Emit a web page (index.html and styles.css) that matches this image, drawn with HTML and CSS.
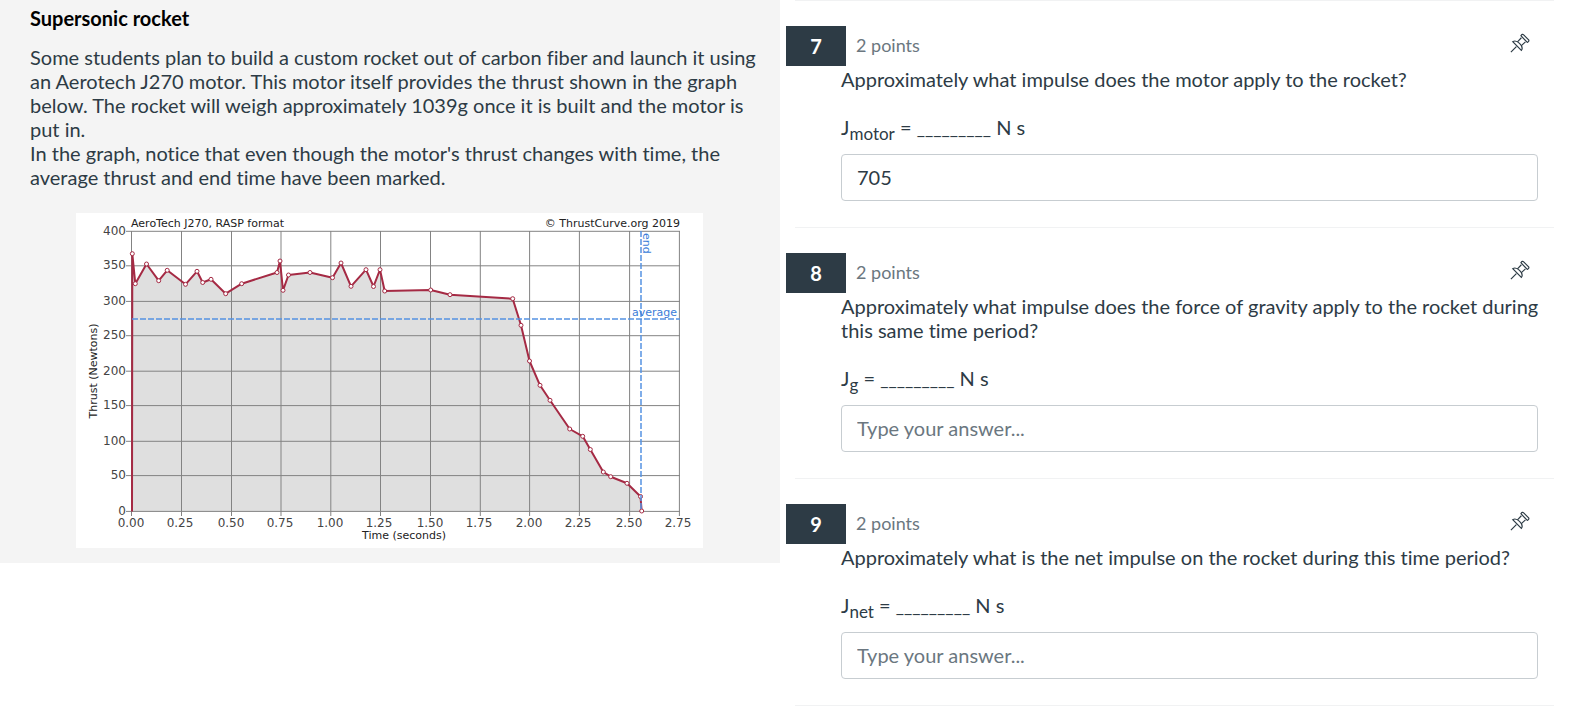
FILE: index.html
```html
<!DOCTYPE html>
<html lang="en">
<head>
<meta charset="utf-8">
<title>Supersonic rocket</title>
<link rel="stylesheet" href="styles.css">
</head>
<body>
<main class="quiz">
  <article class="stimulus">
    <h1 class="stimulus-title">Supersonic rocket</h1>
    <p class="stimulus-text">Some students plan to build a custom rocket out of carbon fiber and launch it using an Aerotech J270 motor. This motor itself provides the thrust shown in the graph below. The rocket will weigh approximately 1039g once it is built and the motor is put in.</p>
    <p class="stimulus-text">In the graph, notice that even though the motor's thrust changes with time, the average thrust and end time have been marked.</p>
    <svg class="chart" viewBox="76 213 627 335" role="img" aria-label="Thrust curve of the AeroTech J270 motor">
      <rect x="76" y="213" width="627" height="335" fill="#fff"/>
      <path class="area" d="M132 511.5V253.7L135.3 283.7L146.5 264L158.7 280.7L167.2 270.3L185.5 284.3L197 271.3L202.7 282.5L211 279.3L225.7 293.7L241.7 283.7L277 272.5L280 261L283 290.3L288.5 275L310 272.5L332.5 277.7L341 263L351 286.3L366 269.7L373.5 286.5L380 269.7L384.7 291L430.7 290L450 294.7L512.7 298.7L521 325.3L529.5 361L540 385.3L550 400.3L569.7 429L582.7 436.3L590.3 449.5L603.3 472L610.7 476.7L627 483.3L640.5 496.5L641.7 511.5Z"/>
      <path class="grid" d="M131.5 231V516M181.5 231V516M231.5 231V516M281 231V516M330.8 231V516M380.5 231V516M430.5 231V516M480.3 231V516M529.6 231V516M579.4 231V516M629.6 231V516M679.4 231V516M126 231.3H680M126 265.8H680M126 301.4H680M126 335.7H680M126 371.2H680M126 405.6H680M126 441.3H680M126 475.6H680M126 511.4H680"/>
      <path class="curve" d="M132 511.5L132.3 253.7L135.3 283.7L146.5 264L158.7 280.7L167.2 270.3L185.5 284.3L197 271.3L202.7 282.5L211 279.3L225.7 293.7L241.7 283.7L277 272.5L280 261L283 290.3L288.5 275L310 272.5L332.5 277.7L341 263L351 286.3L366 269.7L373.5 286.5L380 269.7L384.7 291L430.7 290L450 294.7L512.7 298.7L521 325.3L529.5 361L540 385.3L550 400.3L569.7 429L582.7 436.3L590.3 449.5L603.3 472L610.7 476.7L627 483.3L640.5 496.5L641.7 511.5"/>
      <g class="points">
        <circle cx="132.3" cy="253.7" r="2"/><circle cx="135.3" cy="283.7" r="2"/><circle cx="146.5" cy="264" r="2"/><circle cx="158.7" cy="280.7" r="2"/><circle cx="167.2" cy="270.3" r="2"/><circle cx="185.5" cy="284.3" r="2"/><circle cx="197" cy="271.3" r="2"/><circle cx="202.7" cy="282.5" r="2"/><circle cx="211" cy="279.3" r="2"/><circle cx="225.7" cy="293.7" r="2"/><circle cx="241.7" cy="283.7" r="2"/><circle cx="277" cy="272.5" r="2"/><circle cx="280" cy="261" r="2"/><circle cx="283" cy="290.3" r="2"/><circle cx="288.5" cy="275" r="2"/><circle cx="310" cy="272.5" r="2"/><circle cx="332.5" cy="277.7" r="2"/><circle cx="341" cy="263" r="2"/><circle cx="351" cy="286.3" r="2"/><circle cx="366" cy="269.7" r="2"/><circle cx="373.5" cy="286.5" r="2"/><circle cx="380" cy="269.7" r="2"/><circle cx="384.7" cy="291" r="2"/><circle cx="430.7" cy="290" r="2"/><circle cx="450" cy="294.7" r="2"/><circle cx="512.7" cy="298.7" r="2"/><circle cx="521" cy="325.3" r="2"/><circle cx="529.5" cy="361" r="2"/><circle cx="540" cy="385.3" r="2"/><circle cx="550" cy="400.3" r="2"/><circle cx="569.7" cy="429" r="2"/><circle cx="582.7" cy="436.3" r="2"/><circle cx="590.3" cy="449.5" r="2"/><circle cx="603.3" cy="472" r="2"/><circle cx="610.7" cy="476.7" r="2"/><circle cx="627" cy="483.3" r="2"/><circle cx="640.5" cy="496.5" r="2"/><circle cx="641.7" cy="511" r="2"/>
      </g>
      <path class="marker" d="M132 319H680M641 231V511"/>
      <g class="chart-text">
        <text x="131" y="227">AeroTech J270, RASP format</text>
        <text x="680" y="227" text-anchor="end">© ThrustCurve.org 2019</text>
        <text x="404" y="539" text-anchor="middle">Time (seconds)</text>
        <text transform="translate(97 371) rotate(-90)" text-anchor="middle">Thrust (Newtons)</text>
      </g>
      <g class="ticks" text-anchor="end">
        <text x="126" y="235">400</text><text x="126" y="269">350</text><text x="126" y="305">300</text><text x="126" y="339">250</text><text x="126" y="375">200</text><text x="126" y="409">150</text><text x="126" y="445">100</text><text x="126" y="479">50</text><text x="126" y="515">0</text>
      </g>
      <g class="ticks" text-anchor="middle">
        <text x="131" y="527">0.00</text><text x="180" y="527">0.25</text><text x="231" y="527">0.50</text><text x="280" y="527">0.75</text><text x="330" y="527">1.00</text><text x="379" y="527">1.25</text><text x="430" y="527">1.50</text><text x="479" y="527">1.75</text><text x="529" y="527">2.00</text><text x="578" y="527">2.25</text><text x="629" y="527">2.50</text><text x="678" y="527">2.75</text>
      </g>
      <g class="marker-text">
        <text x="677" y="316" text-anchor="end">average</text>
        <text transform="translate(643 233) rotate(90)">end</text>
      </g>
    </svg>
  </article>

  <section class="questions">
    <form class="question">
      <header class="question-head">
        <span class="number">7</span>
        <span class="points-label">2 points</span>
        <button class="pin" type="button" aria-label="Pin question 7"><svg class="pin-icon" viewBox="0 0 22 22"><path d="M1 21L7 15M3 9.500C5.500 8 7.500 8.500 10.500 11.500C13.500 14.500 14.200 17 12.500 19.200ZM8.500 9.500L12.500 5.200M12.800 13.600L17 9.700M12 3C13 1.500 14 1 15 2L20.500 7.500C21.200 8.600 20.500 9.700 19 10.300Z"/></svg></button>
      </header>
      <label class="prompt" for="answer-7">
        <span class="prompt-line">Approximately what impulse does the motor apply to the rocket?</span>
        <span class="prompt-line">J<sub>motor</sub> = <span class="blank">_________</span> N s</span>
      </label>
      <input class="answer" id="answer-7" type="text" value="705" placeholder="Type your answer...">
    </form>
    <form class="question">
      <header class="question-head">
        <span class="number">8</span>
        <span class="points-label">2 points</span>
        <button class="pin" type="button" aria-label="Pin question 8"><svg class="pin-icon" viewBox="0 0 22 22"><path d="M1 21L7 15M3 9.500C5.500 8 7.500 8.500 10.500 11.500C13.500 14.500 14.200 17 12.500 19.200ZM8.500 9.500L12.500 5.200M12.800 13.600L17 9.700M12 3C13 1.500 14 1 15 2L20.500 7.500C21.200 8.600 20.500 9.700 19 10.300Z"/></svg></button>
      </header>
      <label class="prompt" for="answer-8">
        <span class="prompt-line">Approximately what impulse does the force of gravity apply to the rocket during this same time period?</span>
        <span class="prompt-line">J<sub>g</sub> = <span class="blank">_________</span> N s</span>
      </label>
      <input class="answer" id="answer-8" type="text" placeholder="Type your answer...">
    </form>
    <form class="question">
      <header class="question-head">
        <span class="number">9</span>
        <span class="points-label">2 points</span>
        <button class="pin" type="button" aria-label="Pin question 9"><svg class="pin-icon" viewBox="0 0 22 22"><path d="M1 21L7 15M3 9.500C5.500 8 7.500 8.500 10.500 11.500C13.500 14.500 14.200 17 12.500 19.200ZM8.500 9.500L12.500 5.200M12.800 13.600L17 9.700M12 3C13 1.500 14 1 15 2L20.500 7.500C21.200 8.600 20.500 9.700 19 10.300Z"/></svg></button>
      </header>
      <label class="prompt" for="answer-9">
        <span class="prompt-line">Approximately what is the net impulse on the rocket during this time period?</span>
        <span class="prompt-line">J<sub>net</sub> = <span class="blank">_________</span> N s</span>
      </label>
      <input class="answer" id="answer-9" type="text" placeholder="Type your answer...">
    </form>
    <hr class="list-end">
  </section>
</main>
</body>
</html>
```
FILE: styles.css
```css
* {
  box-sizing: border-box;
}

body {
  margin: 0;
  background: #fff;
  color: #2d3b45;
  font: 20px/24px Lato, sans-serif;
  font-variant-ligatures: none;
}

.quiz {
  display: grid;
  grid-template-columns: 780fr 789fr;
  align-items: start;
}

.stimulus {
  padding: 6px 31px 15px 30px;
  background: #f4f4f4;
}

.stimulus-title {
  margin: 0 0 15px;
  color: #000;
  font-size: 20px;
  font-weight: 700;
  line-height: 24px;
}

.stimulus-text {
  margin: 0 -12px 0 0;
}

.chart {
  display: block;
  width: 100%;
  max-width: 627px;
  margin: 24px auto 0;
  font-family: "DejaVu Sans", sans-serif;
  font-size: 11px;
}

.area {
  fill: #dfdfdf;
}

.grid {
  fill: none;
  stroke: #838383;
  stroke-width: 1;
}

.curve {
  fill: none;
  stroke: #a52a44;
  stroke-width: 2;
  stroke-linejoin: round;
}

.points {
  fill: #fff;
  stroke: #a52a44;
  stroke-width: 1;
}

.marker {
  fill: none;
  stroke: #5592e2;
  stroke-width: 1.5;
  stroke-dasharray: 6 2;
}

.chart-text {
  fill: #222;
}

.ticks {
  fill: #444;
  font-size: 12px;
}

.marker-text {
  fill: #3b7dd8;
}

.questions {
  padding: 0 15px 0 6px;
}

.question {
  display: flex;
  flex-direction: column;
  padding: 25px 16px 26px 0;
}

.question::before,
.list-end {
  content: "";
  height: 1px;
  margin: -25px -16px 25px 9px;
  background: #f1f2f3;
}

.list-end {
  margin: 0 0 0 9px;
  border: 0;
}

.question-head {
  display: flex;
  align-items: center;
  gap: 10px;
  height: 40px;
}

.number {
  flex: none;
  width: 60px;
  background: #2d3b45;
  color: #fff;
  font-weight: 700;
  line-height: 40px;
  text-align: center;
}

.points-label {
  margin-bottom: 2px;
  color: #6b7780;
  font-size: 18px;
}

.pin {
  display: flex;
  margin: 0 8px 6px auto;
  padding: 0;
  border: 0;
  background: none;
}

.pin-icon {
  width: 20px;
  height: 20px;
  fill: none;
  stroke: #2d3b45;
  stroke-width: 1.3;
}

.prompt {
  display: flex;
  flex-direction: column;
  gap: 24px;
  margin: 1px -12px 15px 55px;
}

.prompt-line sub {
  font-size: 17px;
  line-height: 0;
}

.blank {
  font-size: 18px;
  line-height: 20px;
}

.answer {
  height: 47px;
  margin-left: 55px;
  padding: 0 15px 2px;
  border: 1px solid #c7cdd1;
  border-radius: 4px;
  background: #fff;
  color: #2d3b45;
  font: inherit;
}

.answer::placeholder {
  color: #6b7780;
  opacity: 1;
}
```
